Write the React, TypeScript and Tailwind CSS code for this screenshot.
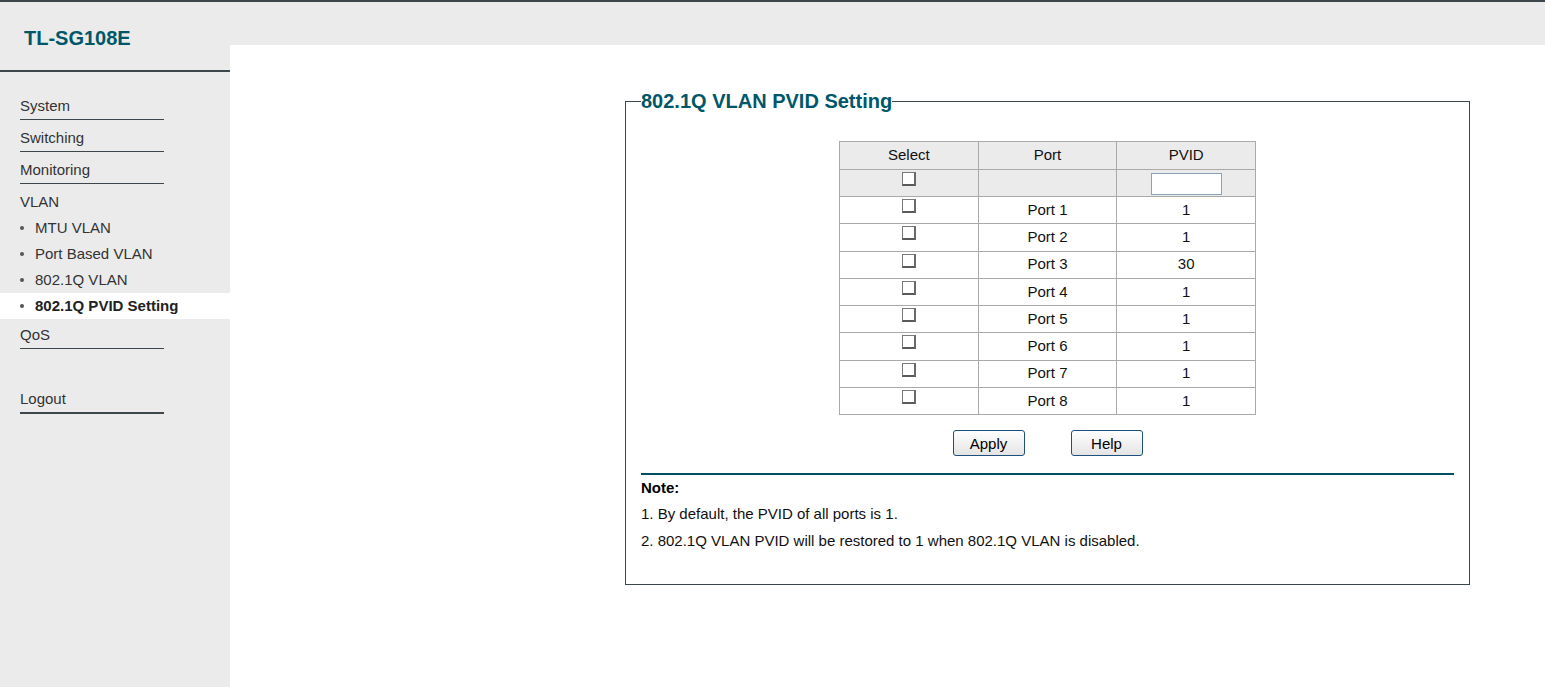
import React from "react";

const menuTop = ["System", "Switching", "Monitoring"];
const vlanItems = ["MTU VLAN", "Port Based VLAN", "802.1Q VLAN", "802.1Q PVID Setting"];
const ports = [
  { name: "Port 1", pvid: "1" },
  { name: "Port 2", pvid: "1" },
  { name: "Port 3", pvid: "30" },
  { name: "Port 4", pvid: "1" },
  { name: "Port 5", pvid: "1" },
  { name: "Port 6", pvid: "1" },
  { name: "Port 7", pvid: "1" },
  { name: "Port 8", pvid: "1" },
];

function Box() {
  return (
    <span className="inline-block h-[14px] w-[14px] border border-[#7a7a7a] border-b-2 border-r-2 border-b-[#5a5a5a] border-r-[#6a6a6a] bg-white" />
  );
}

function Btn({ label }: { label: string }) {
  return (
    <button className="h-[26px] w-[72px] rounded-[3px] border border-[#1f4f7f] bg-gradient-to-b from-white to-[#e4e4e4] text-[15px] leading-none text-black">
      {label}
    </button>
  );
}

export default function App() {
  return (
    <div className="flex h-[687px] flex-col bg-white font-['Liberation_Sans',Arial,sans-serif] text-[15px]">
      <div className="h-[2px] bg-[#3c464b]" />
      <div className="flex flex-1">
        {/* Sidebar */}
        <aside className="w-[230px] bg-[#ebebeb]">
          <div className="h-[68px] pl-[24px] pt-[24px]">
            <div className="text-[20px] font-bold leading-[24px] text-[#00576a]">TL-SG108E</div>
          </div>
          <div className="h-[2px] bg-[#3c464b]" />
          <nav className="mt-[16px] text-[#333]">
            {menuTop.map((m) => (
              <div key={m} className="ml-[20px] w-[144px] border-b border-[#3c464b] pb-[3px] pt-[8px] leading-[20px]">
                {m}
              </div>
            ))}
            <div className="ml-[20px] pb-[3px] pt-[8px] leading-[20px]">VLAN</div>
            {vlanItems.map((m, i) => {
              const active = i === vlanItems.length - 1;
              return (
                <div
                  key={m}
                  className={`flex items-center py-[3px] pl-[20px] leading-[20px] ${active ? "bg-white font-bold text-[#222]" : ""}`}
                >
                  <span className="mr-[11px] inline-block h-[4px] w-[4px] rounded-full bg-[#555]" />
                  {m}
                </div>
              );
            })}
            <div className="ml-[20px] w-[144px] border-b border-[#3c464b] pb-[3px] pt-[6px] leading-[20px]">QoS</div>
            <div className="ml-[20px] w-[144px] border-b-2 border-[#3c464b] pb-[3px] pt-[40px] leading-[20px]">Logout</div>
          </nav>
        </aside>

        {/* Main */}
        <main className="flex flex-1 flex-col">
          <div className="h-[43px] bg-[#ebebeb]" />
          <div className="flex-1 pl-[395px] pt-[44px]">
            <fieldset className="w-[845px] border border-[#3c464b] px-[15px] pb-[33px]">
              <legend className="px-0 text-[20px] font-bold leading-[24px] text-[#00576a]">802.1Q VLAN PVID Setting</legend>

              <table className="mx-auto mt-[28px] w-[417px] border-collapse text-center text-[15px] text-[#111]">
                <thead>
                  <tr className="h-[28px] bg-[#ebebeb]">
                    <th className="w-1/3 border border-[#aaa] font-normal">Select</th>
                    <th className="w-1/3 border border-[#aaa] font-normal">Port</th>
                    <th className="w-1/3 border border-[#aaa] font-normal">PVID</th>
                  </tr>
                </thead>
                <tbody>
                  <tr className="h-[27px] bg-[#ebebeb]">
                    <td className="border border-[#aaa] pt-[2px] align-top leading-none">
                      <Box />
                    </td>
                    <td className="border border-[#aaa]" />
                    <td className="border border-[#aaa] align-middle">
                      <input className="h-[22px] w-[71px] border border-[#8aa3bd] bg-white align-middle outline-none" />
                    </td>
                  </tr>
                  {ports.map((p) => (
                    <tr key={p.name} className="h-[27.3px] bg-white">
                      <td className="border border-[#aaa] pt-[2px] align-top leading-none">
                        <Box />
                      </td>
                      <td className="border border-[#aaa] pb-[2px] pt-[1px] leading-[20px]">{p.name}</td>
                      <td className="border border-[#aaa] pb-[2px] pt-[1px] leading-[20px]">{p.pvid}</td>
                    </tr>
                  ))}
                </tbody>
              </table>

              <div className="mt-[15px] flex justify-center gap-[46px]">
                <Btn label="Apply" />
                <Btn label="Help" />
              </div>

              <div className="mt-[17px] h-[2px] bg-[#00505f]" />
              <div className="mt-[3px] font-bold leading-[20px] text-black">Note:</div>
              <div className="mt-[6px] leading-[20px] text-[#111]">1. By default, the PVID of all ports is 1.</div>
              <div className="mt-[7px] leading-[20px] text-[#111]">
                2. 802.1Q VLAN PVID will be restored to 1 when 802.1Q VLAN is disabled.
              </div>
            </fieldset>
          </div>
        </main>
      </div>
    </div>
  );
}
